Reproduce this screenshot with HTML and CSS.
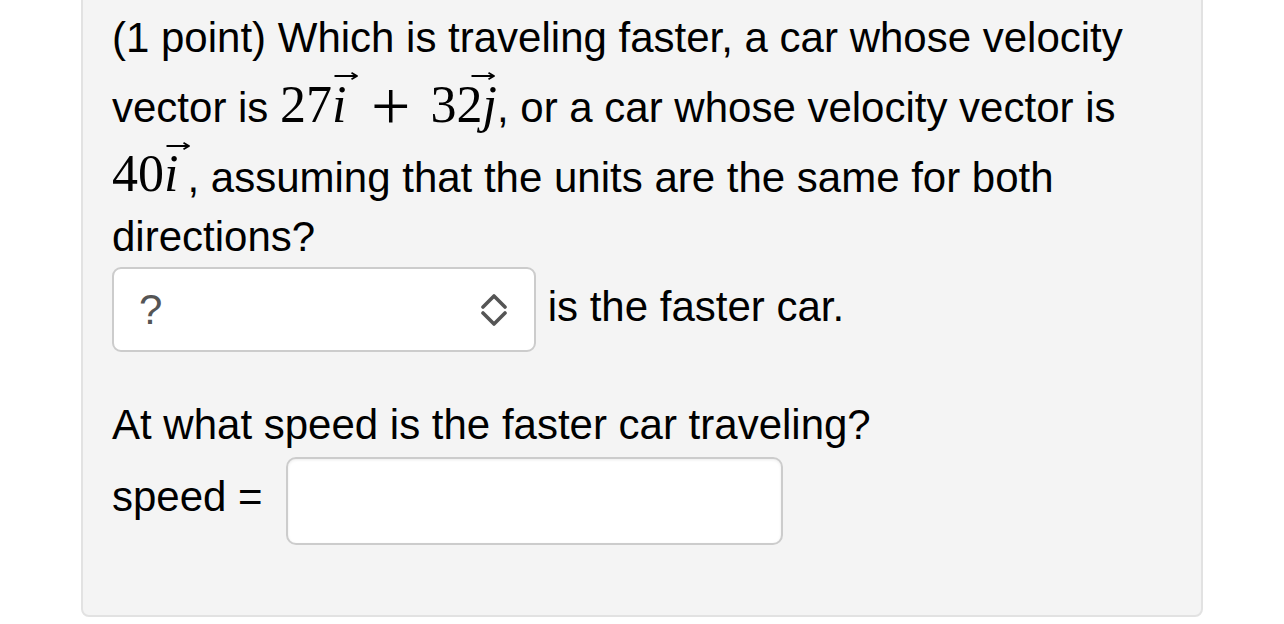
FILE: index.html
```html
<!DOCTYPE html>
<html lang="en">
<head>
<meta charset="utf-8">
<title>Problem</title>
<link rel="stylesheet" href="styles.css">
</head>
<body>
<div class="panel">
  <p class="text">(1 point) Which is traveling faster, a car whose velocity vector is <span class="math"><span class="mn">27</span><span class="vec">i<svg class="arrow" viewBox="0 0 24 8"><path d="M0.5 4H22.5M17.5 0.8L23 4L17.5 7.2"/></svg></span><span class="mo">+</span><span class="mn">32</span><span class="vec vec-j">j<svg class="arrow" viewBox="0 0 24 8"><path d="M0.5 4H22.5M17.5 0.8L23 4L17.5 7.2"/></svg></span></span>, or a car whose velocity vector is <span class="math"><span class="mn">40</span><span class="vec vec-end">i<svg class="arrow" viewBox="0 0 24 8"><path d="M0.5 4H22.5M17.5 0.8L23 4L17.5 7.2"/></svg></span></span>, assuming that the units are the same for both directions?<br><span class="select"><span class="select-value">?</span><svg class="chevron" viewBox="0 0 26 36"><path d="M2 15L13 4L24 15M2 21L13 32L24 21"/></svg></span> is the faster car.</p>
  <p class="text speed">At what speed is the faster car traveling?<br>speed = <span class="answer"></span></p>
</div>
</body>
</html>
```
FILE: styles.css
```css
html, body {
  margin: 0;
  background: #ffffff;
}

body {
  font-family: "Liberation Sans", Arial, Helvetica, sans-serif;
  color: #000000;
}

.panel {
  margin: -20px 81px 0;
  padding: 26px 29px 70px;
  background: #f4f4f4;
  border: 2px solid #e2e2e2;
  border-radius: 8px;
}

.text {
  margin: 0;
  font-size: 42px;
  line-height: 60px;
}

.speed {
  margin-top: 43px;
}

.math {
  font-family: "Liberation Serif", "Times New Roman", serif;
  font-size: 52px;
  line-height: 1;
  white-space: nowrap;
}

.mo {
  font-size: 70px;
  line-height: 40px;
  margin: 0 20px 0 12px;
  vertical-align: -8px;
}

.vec {
  position: relative;
  display: inline-block;
  font-style: italic;
  padding-top: 10.5px;
  padding-right: 12.5px;
}

.vec-j {
  padding-right: 0;
}

.vec-end {
  padding-right: 9px;
}

.arrow {
  position: absolute;
  top: 4px;
  left: 2px;
  width: 24px;
  height: 8px;
  fill: none;
  stroke: #000000;
  stroke-width: 1.8;
  stroke-linejoin: round;
}

.vec-j .arrow {
  left: -11px;
}

.select {
  display: inline-flex;
  align-items: center;
  justify-content: space-between;
  box-sizing: border-box;
  width: 424px;
  height: 85px;
  padding: 0 27px 0 25px;
  vertical-align: middle;
  background: #ffffff;
  border: 2px solid #cccccc;
  border-radius: 9px;
}

.select-value {
  color: #555555;
  line-height: 1;
}

.chevron {
  width: 26px;
  height: 36px;
  fill: none;
  stroke: #555555;
  stroke-width: 3.6;
  stroke-linecap: round;
  stroke-linejoin: round;
}

.answer {
  display: inline-block;
  box-sizing: border-box;
  width: 497px;
  height: 88px;
  margin-left: 12px;
  margin-top: 2px;
  vertical-align: middle;
  background: #ffffff;
  border: 2px solid #cccccc;
  border-radius: 10px;
  box-shadow: inset 0 1px 3px rgba(0, 0, 0, 0.08);
}
```
